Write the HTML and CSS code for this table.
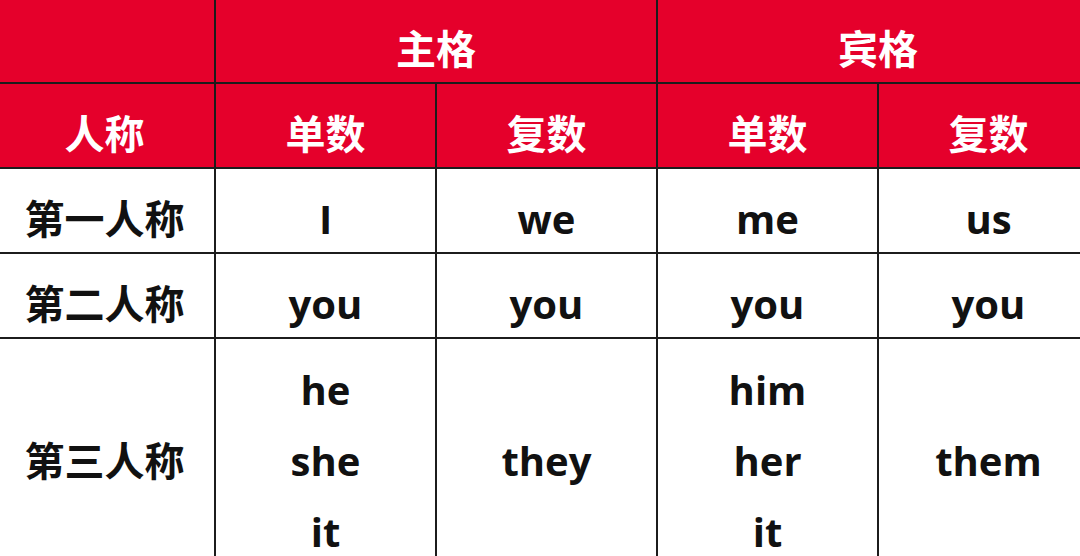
FILE: index.html
```html
<!DOCTYPE html>
<html lang="zh-CN">
<head>
<meta charset="utf-8">
<title>人称代词</title>
<link rel="stylesheet" href="styles.css">
</head>
<body>
<div class="table">
  <div class="cell head"></div>
  <div class="cell head span2">主格</div>
  <div class="cell head span2">宾格</div>

  <div class="cell head">人称</div>
  <div class="cell head">单数</div>
  <div class="cell head">复数</div>
  <div class="cell head">单数</div>
  <div class="cell head">复数</div>

  <div class="cell">第一人称</div>
  <div class="cell">I</div>
  <div class="cell">we</div>
  <div class="cell">me</div>
  <div class="cell">us</div>

  <div class="cell">第二人称</div>
  <div class="cell">you</div>
  <div class="cell">you</div>
  <div class="cell">you</div>
  <div class="cell">you</div>

  <div class="cell">第三人称</div>
  <div class="cell stack"><span>he</span><span>she</span><span>it</span></div>
  <div class="cell">they</div>
  <div class="cell stack"><span>him</span><span>her</span><span>it</span></div>
  <div class="cell">them</div>
</div>
</body>
</html>
```
FILE: styles.css
```css
html, body {
  margin: 0;
  padding: 0;
  background: #ffffff;
  overflow: hidden;
}

body {
  width: 1080px;
  height: 556px;
}

.table {
  display: grid;
  grid-template-columns: repeat(5, 219px);
  grid-template-rows: 83px 83px 83px 83px 227px;
  gap: 2px;
  background: #1c1c1c;
  margin: -1px 0 0 -5px;
  width: 1103px;
  font-family: "Open Sans", "Noto Sans CJK SC", sans-serif;
  font-weight: 700;
  font-size: 40px;
  line-height: 48px;
  color: #111111;
}

.cell {
  background: #ffffff;
  display: flex;
  align-items: center;
  justify-content: center;
  padding-top: 16px;
  box-sizing: border-box;
}

.cell.head {
  background: #e5002b;
  color: #ffffff;
}

.span2 {
  grid-column: span 2;
}

.stack {
  flex-direction: column;
  line-height: 71px;
}

.stack span {
  display: block;
}
```
